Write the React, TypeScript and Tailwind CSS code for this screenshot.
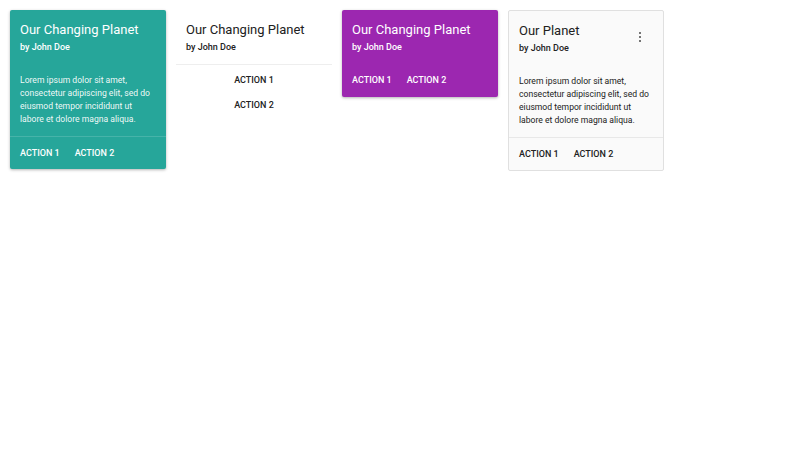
const BODY =
  "Lorem ipsum dolor sit amet, consectetur adipiscing elit, sed do eiusmod tempor incididunt ut labore et dolore magna aliqua."

function Header({ title }: { title: string }) {
  return (
    <div className="px-[10px] pt-[10px] pb-[10px]">
      <div className="text-[13px] leading-[20px]">{title}</div>
      <div className="text-[9px] font-medium leading-[14px]">by John Doe</div>
    </div>
  )
}

function Actions({ className = "" }: { className?: string }) {
  return (
    <div className={`flex h-[33px] items-center gap-[15px] px-[10px] pt-[1px] text-[9px] font-medium ${className}`}>
      <span>ACTION 1</span>
      <span>ACTION 2</span>
    </div>
  )
}

function Kebab() {
  return (
    <svg width="4" height="10" viewBox="0 0 4 10">
      <rect x="1" y="0" width="2" height="2" fill="#757575" />
      <rect x="1" y="4" width="2" height="2" fill="#757575" />
      <rect x="1" y="8" width="2" height="2" fill="#757575" />
    </svg>
  )
}

export default function App() {
  return (
    <div
      className="flex h-[450px] w-[800px] items-start gap-[10px] bg-white p-[10px] text-[#212121]"
      style={{ fontFamily: "Roboto, 'Liberation Sans', sans-serif" }}
    >
      <div className="w-[156px] rounded-[2px] bg-[#26a69a] text-white shadow-[0_1px_3px_rgba(0,0,0,0.3)]">
        <Header title="Our Changing Planet" />
        <p className="px-[10px] pt-[10px] pb-[10px] text-[8.6px] leading-[13px] text-white/95">{BODY}</p>
        <Actions className="border-t border-white/15" />
      </div>

      <div className="w-[156px]">
        <div className="border-b border-[#eeeeee]">
          <Header title="Our Changing Planet" />
        </div>
        <div className="flex flex-col items-center pt-[3px] text-[9px] font-medium">
          <span className="flex h-[25px] items-center">ACTION 1</span>
          <span className="flex h-[25px] items-center">ACTION 2</span>
        </div>
      </div>

      <div className="w-[156px] rounded-[2px] bg-[#9c27b0] text-white shadow-[0_1px_3px_rgba(0,0,0,0.3)]">
        <Header title="Our Changing Planet" />
        <Actions />
      </div>

      <div className="w-[156px] rounded-[2px] border border-[#e0e0e0] bg-[#fafafa]">
        <div className="flex items-start justify-between">
          <Header title="Our Planet" />
          <div className="pt-[21px] pr-[21px]">
            <Kebab />
          </div>
        </div>
        <p className="px-[10px] pt-[10px] pb-[10px] text-[8.6px] leading-[13px]">{BODY}</p>
        <Actions className="border-t border-[#e8e8e8]" />
      </div>
    </div>
  )
}
